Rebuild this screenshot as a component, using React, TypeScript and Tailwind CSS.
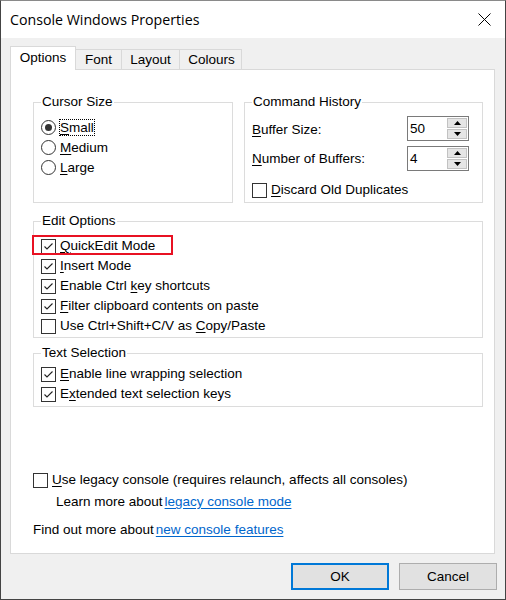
import React from "react";

function CheckMark() {
  return (
    <svg width="13" height="13" viewBox="0 0 13 13" className="block">
      <polyline points="2.5,6.5 5,9 10.5,3.5" fill="none" stroke="#222" strokeWidth="1.1" />
    </svg>
  );
}

function Box({ checked }: { checked: boolean }) {
  return (
    <span className="w-[15px] h-[15px] border border-[#333] bg-white flex items-center justify-center shrink-0">
      {checked && <CheckMark />}
    </span>
  );
}

function CheckRow({
  checked,
  children,
  className = "",
}: {
  checked: boolean;
  children: React.ReactNode;
  className?: string;
}) {
  return (
    <div className={"h-[20px] flex items-center gap-[4px] " + className}>
      <Box checked={checked} />
      <span className="leading-[16px] whitespace-nowrap">{children}</span>
    </div>
  );
}

function Radio({ checked, focused, children }: { checked: boolean; focused?: boolean; children: React.ReactNode }) {
  return (
    <div className="h-[20px] flex items-center gap-[3px]">
      <span className="w-[15px] h-[15px] rounded-full border border-[#333] bg-white flex items-center justify-center shrink-0">
        {checked && <span className="w-[7px] h-[7px] rounded-full bg-[#333]" />}
      </span>
      <span
        className={
          "leading-[15px] border " + (focused ? "border-dotted border-black" : "border-transparent")
        }
      >
        {children}
      </span>
    </div>
  );
}

function Spin({ value }: { value: string }) {
  return (
    <div className="w-[62px] h-[25px] border border-[#7a7a7a] bg-white flex">
      <div className="flex-1 pl-[2px] flex items-center leading-[16px]">{value}</div>
      <div className="w-[20px] my-[1px] mr-[1px] flex flex-col gap-px">
        <div className="flex-1 bg-[#e5e5e5] border border-[#c2c2c2] flex items-center justify-center">
          <svg width="7" height="4" viewBox="0 0 7 4" className="block">
            <polygon points="3.5,0 7,4 0,4" fill="#000" />
          </svg>
        </div>
        <div className="flex-1 bg-[#e5e5e5] border border-[#c2c2c2] flex items-center justify-center">
          <svg width="7" height="4" viewBox="0 0 7 4" className="block">
            <polygon points="0,0 7,0 3.5,4" fill="#000" />
          </svg>
        </div>
      </div>
    </div>
  );
}

function U({ children }: { children: React.ReactNode }) {
  return <span className="underline underline-offset-[2px]">{children}</span>;
}

export default function App() {
  return (
    <div className="w-[506px] h-[600px] bg-[#f0f0f0] border border-[#444] border-t-[#8a8a8a] flex flex-col text-[13.5px] text-black font-['Liberation_Sans',Arial,sans-serif]">
      {/* Title bar */}
      <div className="h-[37px] bg-white flex items-center justify-between pl-[9px] pr-[14px] shrink-0">
        <span className="text-[14.2px] font-['Open_Sans','Noto_Sans',sans-serif] text-black">
          Console Windows Properties
        </span>
        <svg width="13" height="13" viewBox="0 0 13 13" className="block">
          <path d="M0.5 0.5 L12.5 12.5 M12.5 0.5 L0.5 12.5" stroke="#000" strokeWidth="1" fill="none" />
        </svg>
      </div>

      {/* Tabs */}
      <div className="pt-[8px] pl-[9px] flex items-end relative z-10 shrink-0">
        <div className="w-[66px] h-[24px] bg-white border-l border-t border-r border-[#d9d9d9] flex justify-center pt-[3px] leading-[16px]">
          Options
        </div>
        <div className="w-[46px] h-[20px] bg-[#f0f0f0] border-t border-r border-[#d9d9d9] flex justify-center items-center mb-px leading-[16px]">
          Font
        </div>
        <div className="w-[58px] h-[20px] bg-[#f0f0f0] border-t border-r border-[#d9d9d9] flex justify-center items-center mb-px leading-[16px]">
          Layout
        </div>
        <div className="w-[62px] h-[20px] bg-[#f0f0f0] border-t border-r border-[#d9d9d9] flex justify-center items-center mb-px pl-[2px] leading-[16px]">
          Colours
        </div>
      </div>

      {/* Panel */}
      <div className="ml-[9px] -mt-px w-[485px] h-[485px] border border-[#d9d9d9] bg-white pt-[24px] pl-[22px] pr-[11px] flex flex-col shrink-0">
        <div className="flex gap-[11px]">
          <fieldset className="w-[200px] border border-[#dcdcdc] px-[7px] pt-[7px] pb-[1px] min-w-0">
            <legend className="px-[1px] leading-[16px]">Cursor Size</legend>
            <Radio checked focused>
              <U>S</U>mall
            </Radio>
            <Radio checked={false}>
              <U>M</U>edium
            </Radio>
            <Radio checked={false}>
              <U>L</U>arge
            </Radio>
          </fieldset>
          <fieldset className="w-[239px] border border-[#dcdcdc] px-[7px] pt-[6px] pb-[2px] min-w-0">
            <legend className="px-[1px] leading-[16px]">Command History</legend>
            <div className="pr-[6px] flex flex-col">
              <div className="flex items-center justify-between">
                <span className="leading-[16px] pt-[2px]">
                  <U>B</U>uffer Size:
                </span>
                <Spin value="50" />
              </div>
              <div className="flex items-center justify-between mt-[5px]">
                <span className="leading-[16px] pt-[1px]">
                  <U>N</U>umber of Buffers:
                </span>
                <Spin value="4" />
              </div>
              <CheckRow checked={false} className="mt-[9px]">
                <U>D</U>iscard Old Duplicates
              </CheckRow>
            </div>
          </fieldset>
        </div>

        <fieldset className="mt-[10px] w-[450px] border border-[#dcdcdc] px-[7px] pt-[7px] pb-[1px] min-w-0">
          <legend className="px-[1px] leading-[16px]">Edit Options</legend>
          <div className="relative">
            <CheckRow checked>
              <U>Q</U>uickEdit Mode
            </CheckRow>
            <div className="absolute left-[-9px] top-[-1px] w-[141px] h-[20px] border-2 border-[#e81123]" />
          </div>
          <CheckRow checked>
            <U>I</U>nsert Mode
          </CheckRow>
          <CheckRow checked>
            Enable Ctrl <U>k</U>ey shortcuts
          </CheckRow>
          <CheckRow checked>
            <U>F</U>ilter clipboard contents on paste
          </CheckRow>
          <CheckRow checked={false}>
            Use Ctrl+Shift+C/V as <U>C</U>opy/Paste
          </CheckRow>
        </fieldset>

        <fieldset className="mt-[7px] w-[450px] border border-[#dcdcdc] px-[7px] pt-[3px] pb-[2px] min-w-0">
          <legend className="px-[1px] leading-[16px]">Text Selection</legend>
          <CheckRow checked>
            <U>E</U>nable line wrapping selection
          </CheckRow>
          <CheckRow checked>
            E<U>x</U>tended text selection keys
          </CheckRow>
        </fieldset>

        <CheckRow checked={false} className="mt-[63px]">
          <U>U</U>se legacy console (requires relaunch, affects all consoles)
        </CheckRow>
        <div className="mt-[2px] h-[20px] flex items-center pl-[23px] leading-[16px] whitespace-nowrap">
          <span>Learn more about</span>
          <span className="ml-[2px] text-[#0066cc] underline underline-offset-[2px]">legacy console mode</span>
        </div>
        <div className="mt-[8px] h-[20px] flex items-center leading-[16px] whitespace-nowrap">
          <span>Find out more about</span>
          <span className="ml-[2px] text-[#0066cc] underline underline-offset-[2px]">new console features</span>
        </div>
      </div>

      {/* Buttons */}
      <div className="mt-[9px] flex justify-end gap-[10px] pr-[8px]">
        <div className="w-[98px] h-[27px] bg-[#e1e1e1] border-2 border-[#0078d7] flex items-center justify-center leading-[16px]">
          OK
        </div>
        <div className="w-[98px] h-[27px] bg-[#e1e1e1] border border-[#adadad] flex items-center justify-center leading-[16px]">
          Cancel
        </div>
      </div>
    </div>
  );
}
